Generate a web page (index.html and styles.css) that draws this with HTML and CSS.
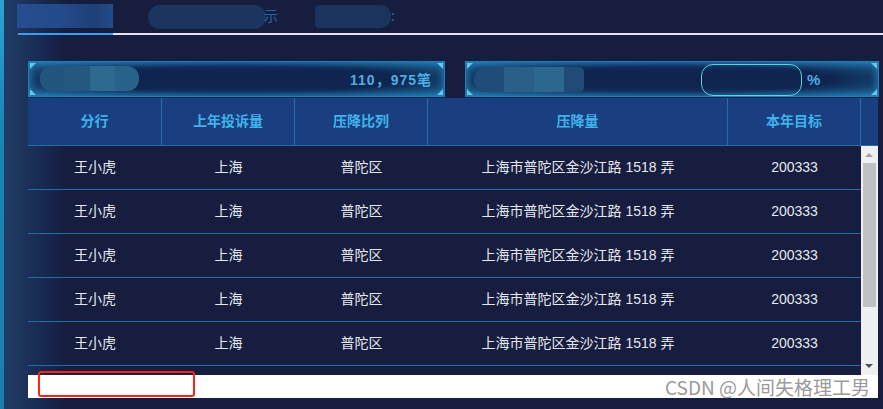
FILE: index.html
```html
<!DOCTYPE html>
<html lang="zh">
<head>
<meta charset="utf-8">
<title>投诉压降</title>
<link rel="stylesheet" href="styles.css">
</head>
<body>
<div class="page">
  <div class="edge"></div>
  <div class="main">
    <div class="tabs">
      <div class="tab tab-active"><span class="blur b1"></span></div>
      <div class="tab"><span class="blur b2"></span><span class="frag">示</span></div>
      <div class="tab"><span class="blur b3"></span><span class="frag">:</span></div>
    </div>
    <div class="stats">
      <div class="panel panel-a">
        <i class="c ctl"></i><i class="c ctr"></i><i class="c cbl"></i><i class="c cbr"></i>
        <span class="mosaic m1"><b></b><b></b><b></b><b></b></span>
        <span class="num">110，975笔</span>
      </div>
      <div class="panel panel-b">
        <i class="c ctl"></i><i class="c ctr"></i><i class="c cbl"></i><i class="c cbr"></i>
        <span class="mosaic m2"><b></b><b></b><b></b><b></b></span>
        <span class="inputbox"></span>
        <span class="pct">%</span>
      </div>
    </div>
    <div class="table">
      <div class="thead">
        <div class="th w0">分行</div>
        <div class="th w1">上年投诉量</div>
        <div class="th w1">压降比列</div>
        <div class="th w2">压降量</div>
        <div class="th w1">本年目标</div>
        <div class="th gutter"></div>
      </div>
      <div class="tbody">
        <div class="rows">
          <div class="row"><div class="td w0">王小虎</div><div class="td w1">上海</div><div class="td w1">普陀区</div><div class="td w2">上海市普陀区金沙江路 1518 弄</div><div class="td w1">200333</div></div>
          <div class="row"><div class="td w0">王小虎</div><div class="td w1">上海</div><div class="td w1">普陀区</div><div class="td w2">上海市普陀区金沙江路 1518 弄</div><div class="td w1">200333</div></div>
          <div class="row"><div class="td w0">王小虎</div><div class="td w1">上海</div><div class="td w1">普陀区</div><div class="td w2">上海市普陀区金沙江路 1518 弄</div><div class="td w1">200333</div></div>
          <div class="row"><div class="td w0">王小虎</div><div class="td w1">上海</div><div class="td w1">普陀区</div><div class="td w2">上海市普陀区金沙江路 1518 弄</div><div class="td w1">200333</div></div>
          <div class="row"><div class="td w0">王小虎</div><div class="td w1">上海</div><div class="td w1">普陀区</div><div class="td w2">上海市普陀区金沙江路 1518 弄</div><div class="td w1">200333</div></div>
        </div>
        <div class="scrollbar">
          <span class="arrow up"></span>
          <span class="thumb"></span>
          <span class="arrow down"></span>
        </div>
      </div>
      <div class="footer">
        <span class="redbox"></span>
        <span class="watermark">CSDN @人间失格理工男</span>
      </div>
    </div>
  </div>
</div>
</body>
</html>
```
FILE: styles.css
```css
* { box-sizing: border-box; }
html, body { margin: 0; padding: 0; }
body {
  width: 883px;
  height: 409px;
  overflow: hidden;
  background: #161d3e;
  font-family: "Liberation Sans", "Noto Sans CJK SC", sans-serif;
}
.page { display: flex; height: 409px; }
.edge {
  width: 4px;
  flex: none;
  background: linear-gradient(to bottom, #2aa5d6, #1a86b6 30%, #1a7fae);
}
.main {
  flex: 1;
  background: linear-gradient(to right, #1f3c66 0, #1e3860 12px, #182850 40px, #161d3e 62px);
}
.tabs {
  display: flex;
  height: 35px;
  margin-left: 14px;
  border-bottom: 2px solid #e6e6ee;
}
.tab { position: relative; height: 33px; }
.tab:nth-child(1) { width: 95px; }
.tab:nth-child(2) { width: 167px; margin-left: 35px; }
.tab:nth-child(3) { width: 120px; margin-left: 35px; }
.tab-active { box-shadow: 0 2px 0 #3a9df2; }
.blur { position: absolute; display: block; }
.b1 { left: -1px; top: 4px; width: 96px; height: 24px; background: linear-gradient(to right, #264e8e, #234a8a 50%, #1f3f78 80%, #244c88); }
.b2 { left: 0; top: 5px; width: 118px; height: 24px; border-radius: 12px; background: #1b355f; }
.b3 { left: -35px; top: 5px; width: 76px; height: 23px; border-radius: 4px 10px 10px 4px; background: #1b345e; }
.frag { position: absolute; top: 6px; left: 116px; color: #2a86c8; font-size: 14px; opacity: .7; font-family: "Noto Sans CJK SC", sans-serif; line-height: 18px; }
.b3 + .frag { left: 41px; }

.stats {
  display: flex;
  gap: 20px;
  margin: 26px 0 0 24px;
}
.panel {
  position: relative;
  height: 36px;
  border: 1px solid #1a7fb6;
  background: radial-gradient(ellipse at center, #0f2550 55%, #17527f 85%, #1d6a9c 100%);
  box-shadow: inset 0 0 8px #2b8ccc;
  display: flex;
  align-items: center;
}
.panel-a { width: 417px; justify-content: flex-end; padding-right: 12px; }
.panel-b { width: 414px; }
.c { position: absolute; width: 0; height: 0; border: 3px solid transparent; }
.ctl { left: 1px; top: 1px; border-left-color: #63c8ee; border-top-color: #63c8ee; }
.ctr { right: 1px; top: 1px; border-right-color: #63c8ee; border-top-color: #63c8ee; }
.cbl { left: 1px; bottom: 1px; border-left-color: #63c8ee; border-bottom-color: #63c8ee; }
.cbr { right: 1px; bottom: 1px; border-right-color: #63c8ee; border-bottom-color: #63c8ee; }
.mosaic {
  position: absolute;
  top: 4px;
  display: flex;
  height: 25px;
  border-radius: 12px;
  overflow: hidden;
  background: #1f4e78;
}
.m1 { left: 11px; width: 99px; }
.m2 { left: 8px; width: 110px; top: 5px; border-radius: 14px 6px 6px 14px; background: #1c4673; }
.mosaic b { display: block; height: 100%; }
.m1 b:nth-child(1) { width: 25px; background: #22567e; }
.m1 b:nth-child(2) { width: 25px; background: #24587f; }
.m1 b:nth-child(3) { width: 25px; background: #2d6a8e; }
.m1 b:nth-child(4) { width: 24px; background: #28628a; }
.m2 b:nth-child(1) { width: 30px; background: #1f4c78; }
.m2 b:nth-child(2) { width: 30px; background: #2a5f88; }
.m2 b:nth-child(3) { width: 30px; background: #2d6790; }
.m2 b:nth-child(4) { width: 20px; background: #1f4b76; }
.num { color: #4aaee3; font-weight: bold; font-size: 14px; letter-spacing: 1px; }
.inputbox {
  position: absolute;
  left: 235px;
  top: 2px;
  width: 101px;
  height: 32px;
  border: 1px solid #5ed3d6;
  border-radius: 12px;
}
.pct {
  position: absolute;
  left: 341px;
  top: 9px;
  color: #4aaee3;
  font-weight: bold;
  font-size: 15px;
}

.table { margin: 1px 0 0 24px; width: 850px; }
.thead {
  display: flex;
  height: 48px;
  background: #1a3f80;
  border-bottom: 1px solid #1f6faa;
}
.th {
  display: flex;
  align-items: center;
  justify-content: center;
  color: #3fb3ea;
  font-weight: bold;
  font-size: 14px;
  border-right: 1px solid #1f6faa;
  font-family: "Noto Sans CJK SC", sans-serif;
  padding-bottom: 3px;
}
.w0 { width: 134px; flex: none; }
.w1 { width: 133px; flex: none; }
.w2 { width: 300px; flex: none; }
.th.gutter { width: 17px; border-right: 0; flex: none; }
.tbody { display: flex; height: 229px; overflow: hidden; }
.rows { width: 833px; flex: none; }
.row { display: flex; height: 44px; border-bottom: 1px solid #1f6faa; }
.td {
  display: flex;
  align-items: center;
  justify-content: center;
  color: #e6e8f0;
  font-size: 14px;
  line-height: 18px;
  padding-bottom: 1px;
}
.scrollbar {
  position: relative;
  width: 17px;
  flex: none;
  background: #f0f0f0;
}
.arrow { position: absolute; left: 4px; width: 0; height: 0; border: 4px solid transparent; }
.up { top: 3px; border-bottom: 4px solid #a3a3a3; }
.down { bottom: 3px; border-top: 4px solid #505050; }
.thumb {
  position: absolute;
  left: 2px;
  top: 17px;
  width: 13px;
  height: 144px;
  background: #c1c1c1;
}
.footer {
  position: relative;
  height: 23px;
  background: #ffffff;
}
.redbox {
  position: absolute;
  left: 10px;
  top: -4px;
  width: 157px;
  height: 26px;
  border: 2px solid #ff2412;
  border-radius: 3px;
}
.watermark {
  position: absolute;
  right: 8px;
  top: 0;
  font-size: 19px;
  color: #9a9a9a;
  font-family: "Noto Sans CJK SC", sans-serif;
  line-height: 23px;
}
```
